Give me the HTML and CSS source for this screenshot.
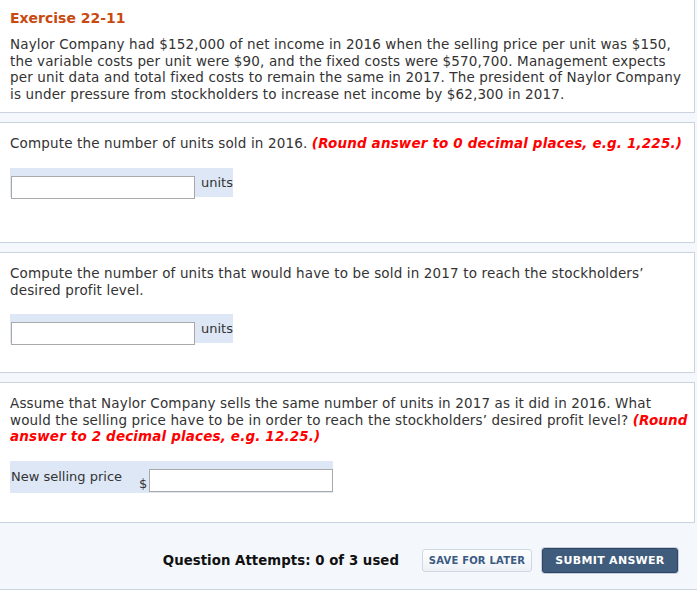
FILE: index.html
```html
<!DOCTYPE html>
<html>
<head>
<meta charset="utf-8">
<link rel="stylesheet" href="styles.css">
</head>
<body>
<div class="page">
  <section class="card card-intro">
    <h1 class="title">Exercise 22-11</h1>
    <p class="text">Naylor Company had $152,000 of net income in 2016 when the selling price per unit was $150, the variable costs per unit were $90, and the fixed costs were $570,700. Management expects per unit data and total fixed costs to remain the same in 2017. The president of Naylor Company is under pressure from stockholders to increase net income by $62,300 in 2017.</p>
  </section>

  <section class="card card-q">
    <p class="text">Compute the number of units sold in 2016. <span class="hint">(Round answer to 0 decimal places, e.g. 1,225.)</span></p>
    <div class="answer-row">
      <input class="field" type="text">
      <span class="unit">units</span>
    </div>
  </section>

  <section class="card card-q">
    <p class="text">Compute the number of units that would have to be sold in 2017 to reach the stockholders’ desired profit level.</p>
    <div class="answer-row">
      <input class="field" type="text">
      <span class="unit">units</span>
    </div>
  </section>

  <section class="card card-q card-last">
    <p class="text">Assume that Naylor Company sells the same number of units in 2017 as it did in 2016. What would the selling price have to be in order to reach the stockholders’ desired profit level? <span class="hint">(Round answer to 2 decimal places, e.g. 12.25.)</span></p>
    <div class="answer-row price-row">
      <span class="label">New selling price</span>
      <span class="dollar">$</span>
      <input class="field" type="text">
    </div>
  </section>

  <footer class="footer">
    <span class="attempts">Question Attempts: 0 of 3 used</span>
    <button class="btn btn-save" type="button">SAVE FOR LATER</button>
    <button class="btn btn-submit" type="button">SUBMIT ANSWER</button>
  </footer>
</div>
</body>
</html>
```

FILE: styles.css
```css
html, body {
  margin: 0;
  padding: 0;
  background: #ffffff;
}

body {
  font-family: "DejaVu Sans", Verdana, sans-serif;
  font-size: 13px;
  color: #333333;
}

.page {
  width: 697px;
  background: #f4f7fb;
  display: flex;
  flex-direction: column;
  gap: 9px;
  border-bottom: 1px solid #cdd5e1;
}

.card {
  background: #ffffff;
  border: 1px solid #cbd3e0;
  margin-left: -1px;
  width: 696px;
  box-sizing: border-box;
  padding: 0 4px 0 10px;
}

.card-intro {
  margin-top: -1px;
  padding-top: 9px;
  height: 114px;
}

.title {
  margin: 0 0 9px 0;
  font-size: 14px;
  font-weight: bold;
  line-height: 18px;
  color: #c9490f;
}

.text {
  margin: 0;
  font-size: 13.5px;
  line-height: 16.7px;
  letter-spacing: 0.15px;
}

.hint {
  color: #ff0000;
  font-weight: bold;
  font-style: italic;
}

.card-q {
  padding-top: 12px;
  height: 121px;
}

.card-last {
  height: 141px;
}

.answer-row {
  display: inline-flex;
  align-items: flex-start;
  background: #dde7f6;
  height: 29px;
  margin-top: 16px;
  padding-left: 1px;
}

.field {
  width: 184px;
  height: 23px;
  box-sizing: border-box;
  margin: 8px 0 0 0;
  border: 1px solid #a9a9a9;
  background: #ffffff;
  padding: 0 3px;
  font: inherit;
}

.unit {
  margin-left: 6px;
  line-height: 30px;
}

.price-row {
  height: 32px;
}

.label {
  line-height: 32px;
  width: 128px;
}

.dollar {
  margin-top: 15px;
  line-height: 16px;
  width: 10px;
}

.footer {
  margin-top: -9px;
  height: 66px;
  box-sizing: border-box;
  padding-top: 9px;
  display: flex;
  align-items: center;
  justify-content: flex-end;
  padding-right: 19px;
}

.attempts {
  font-weight: bold;
  font-size: 13.3px;
  color: #111111;
  margin-right: 23px;
  letter-spacing: 0.05px;
}

.btn {
  font-family: "DejaVu Sans", Verdana, sans-serif;
  font-weight: bold;
  font-size: 10px;
  letter-spacing: 0.2px;
  box-sizing: border-box;
  padding: 0;
  cursor: pointer;
}

.btn-save {
  width: 110px;
  height: 23px;
  background: linear-gradient(#ffffff, #edf1f6);
  border: 1px solid #cfd7e2;
  border-radius: 3px;
  color: #3b5b84;
  margin-right: 10px;
}

.btn-submit {
  width: 136px;
  height: 25px;
  background: #3f5c7c;
  border: 1px solid #2d4562;
  border-radius: 3px;
  color: #ffffff;
  box-shadow: 0 0 0 1px #c6d0dc;
  font-size: 11px;
  letter-spacing: 0.3px;
}
```
